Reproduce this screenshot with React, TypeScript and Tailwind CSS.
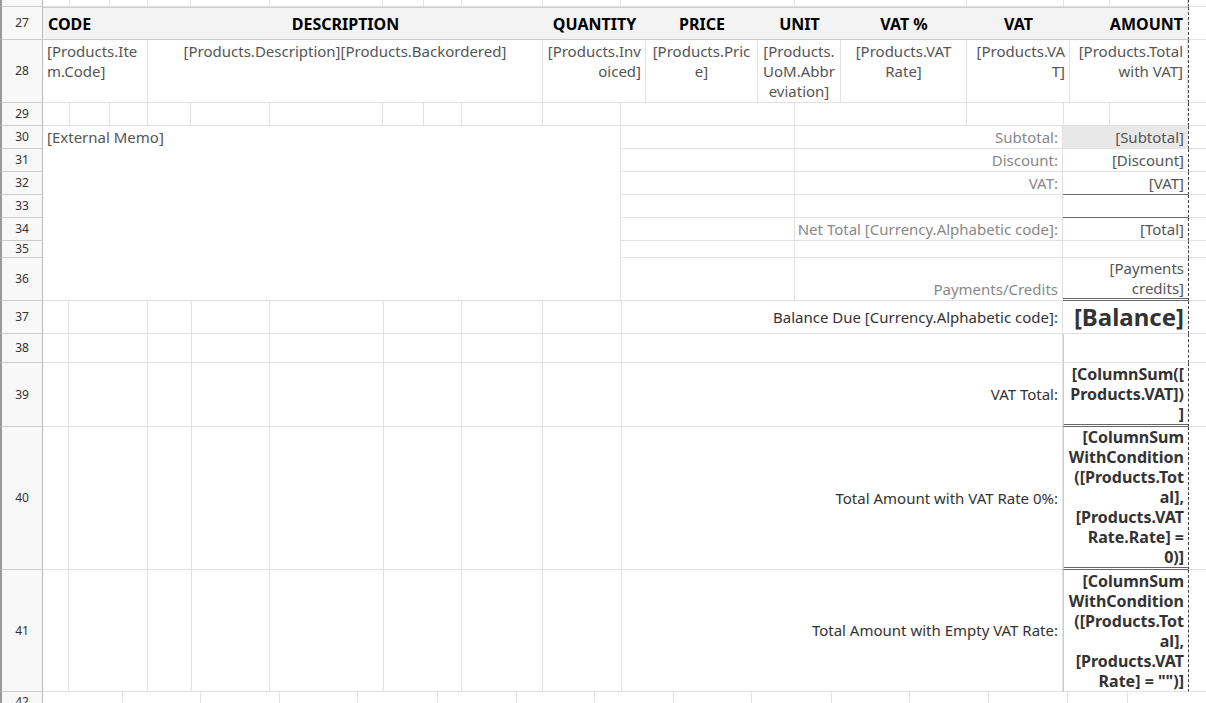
import React from "react";

const grid = "border-r border-b border-[#e2e2e2]";

function RowHead({ n, h }: { n?: number; h: string }) {
  return (
    <div
      className={`${h} w-[43px] shrink-0 flex items-center justify-center bg-[#f8f8f8] border-l-2 border-l-[#999] border-r border-r-[#bbb] border-b border-b-[#ccc] text-[12px] text-[#333]`}
    >
      {n}
    </div>
  );
}

function Edge() {
  return <div className="w-[18px] shrink-0 border-b border-[#e2e2e2] border-l border-l-[#444] [border-left-style:dashed]" />;
}

function Blank({ widths }: { widths: number[] }) {
  return (
    <>
      {widths.map((w, i) => (
        <div key={i} className={`${grid} shrink-0`} style={{ width: w }} />
      ))}
    </>
  );
}

const leftCols = [26, 79, 44, 78, 114, 78, 81, 79];
const row29 = [27, 40, 38, 43, 79, 113, 41, 38, 81, 78, 174, 172, 97, 46, 78];

function SumRow({
  n,
  h,
  label,
  value,
  labelClass = "text-[#333]",
  valueClass = "",
}: {
  n: number;
  h: string;
  label?: string;
  value?: React.ReactNode;
  labelClass?: string;
  valueClass?: string;
}) {
  return (
    <div className={`flex ${h}`}>
      <RowHead n={n} h={h} />
      <Blank widths={leftCols} />
      <div className={`${grid} w-[441px] shrink-0 flex items-center justify-end px-[4px] whitespace-nowrap ${labelClass}`}>{label}</div>
      <div
        className={`w-[125px] shrink-0 border-b border-[#e2e2e2] flex items-center justify-end text-right px-[4px] leading-[20px] [overflow-wrap:anywhere] ${valueClass}`}
      >
        {value}
      </div>
      <Edge />
    </div>
  );
}

function TotRow({
  label,
  value,
  h = "h-[23px]",
  labelClass = "text-[#888]",
  valueClass = "border-b border-[#e2e2e2]",
  bottom = false,
}: {
  label?: string;
  value?: string;
  h?: string;
  labelClass?: string;
  valueClass?: string;
  bottom?: boolean;
}) {
  return (
    <div className={`flex ${h}`}>
      <div className={`${grid} w-[174px] shrink-0`} />
      <div className={`${grid} w-[268px] shrink-0 flex ${bottom ? "items-end" : "items-center"} justify-end px-[4px] whitespace-nowrap ${labelClass}`}>
        {label}
      </div>
      <div className={`w-[125px] shrink-0 flex ${bottom ? "items-end" : "items-center"} justify-end text-right px-[4px] leading-[20px] text-[#555] ${valueClass}`}>
        {value}
      </div>
      <Edge />
    </div>
  );
}

export default function App() {
  const heads: [string, number, string][] = [
    ["CODE", 105, "justify-start"],
    ["DESCRIPTION", 395, "justify-center"],
    ["QUANTITY", 103, "justify-center"],
    ["PRICE", 112, "justify-center"],
    ["UNIT", 83, "justify-center"],
    ["VAT %", 126, "justify-center"],
    ["VAT", 103, "justify-center"],
    ["AMOUNT", 118, "justify-end"],
  ];
  const data: [string, number, string][] = [
    ["[Products.Item.Code]", 105, "text-left"],
    ["[Products.Description][Products.Backordered]", 395, "text-center"],
    ["[Products.Invoiced]", 103, "text-right"],
    ["[Products.Price]", 112, "text-center"],
    ["[Products.UoM.Abbreviation]", 83, "text-center"],
    ["[Products.VAT Rate]", 126, "text-center"],
    ["[Products.VAT]", 103, "text-right"],
    ["[Products.Total with VAT]", 118, "text-right"],
  ];

  return (
    <div className="w-[1206px] h-[703px] overflow-hidden bg-white text-[15px] text-[#555] [font-family:'Liberation_Sans',Arial,sans-serif]">
      {/* row 26 (partial) */}
      <div className="flex h-[7px]">
        <RowHead h="h-[7px]" />
        <Blank widths={row29} />
        <Edge />
      </div>

      {/* 27 header */}
      <div className="flex h-[33px]">
        <RowHead n={27} h="h-[33px]" />
        {heads.map(([t, w, j]) => (
          <div
            key={t}
            className={`shrink-0 flex items-center ${j} px-[5px] bg-[#f3f3f3] border-t border-t-[#ccc] border-b border-b-[#ccc] font-bold text-[16px] text-black`}
            style={{ width: w }}
          >
            {t}
          </div>
        ))}
        <Edge />
      </div>

      {/* 28 data */}
      <div className="flex h-[63px]">
        <RowHead n={28} h="h-[63px]" />
        {data.map(([t, w, a]) => (
          <div
            key={t}
            className={`${grid} shrink-0 px-[4px] pt-[1px] leading-[20px] [overflow-wrap:anywhere] ${a}`}
            style={{ width: w }}
          >
            {t}
          </div>
        ))}
        <Edge />
      </div>

      {/* 29 */}
      <div className="flex h-[23px]">
        <RowHead n={29} h="h-[23px]" />
        <Blank widths={row29} />
        <Edge />
      </div>

      {/* 30 - 36 */}
      <div className="flex h-[175px]">
        <div className="flex flex-col">
          {[30, 31, 32, 33, 34].map((n) => (
            <RowHead key={n} n={n} h="h-[23px]" />
          ))}
          <RowHead n={35} h="h-[17px]" />
          <RowHead n={36} h="h-[43px]" />
        </div>
        <div className={`${grid} w-[578px] shrink-0 px-[4px] leading-[22px]`}>[External Memo]</div>
        <div className="flex flex-col">
          <TotRow label="Subtotal:" value="[Subtotal]" valueClass="bg-[#e8e8e8] border-b border-[#e2e2e2]" />
          <TotRow label="Discount:" value="[Discount]" />
          <TotRow label="VAT:" value="[VAT]" valueClass="border-b border-[#666]" />
          <TotRow valueClass="border-b border-[#666]" />
          <TotRow label="Net Total [Currency.Alphabetic code]:" value="[Total]" />
          <TotRow h="h-[17px]" />
          <TotRow
            h="h-[43px]"
            bottom
            label="Payments/Credits"
            value="[Payments credits]"
            valueClass="border-b-[3px] border-double border-[#666]"
          />
        </div>
      </div>

      <SumRow
        n={37}
        h="h-[33px]"
        label="Balance Due [Currency.Alphabetic code]:"
        value="[Balance]"
        valueClass="font-bold text-[24px] text-[#333]"
      />
      <SumRow n={38} h="h-[29px]" valueClass="border-l border-l-[#ccc]" />
      <SumRow
        n={39}
        h="h-[64px]"
        label="VAT Total:"
        value="[ColumnSum([Products.VAT])]"
        valueClass="font-bold text-[16px] text-[#333] border-l border-l-[#ccc] border-b-[3px] border-double border-b-[#666]"
      />
      <SumRow
        n={40}
        h="h-[143px]"
        label="Total Amount with VAT Rate 0%:"
        value="[ColumnSum WithCondition ([Products.Total], [Products.VAT Rate.Rate] = 0)]"
        valueClass="font-bold text-[16px] text-[#333] border-l border-l-[#ccc] border-b-[3px] border-double border-b-[#666]"
      />
      <SumRow
        n={41}
        h="h-[122px]"
        label="Total Amount with Empty VAT Rate:"
        value={'[ColumnSum WithCondition ([Products.Total], [Products.VAT Rate] = "")]'}
        valueClass="font-bold text-[16px] text-[#333] border-l border-l-[#ccc]"
      />

      {/* 42 */}
      <div className="flex h-[20px]">
        <RowHead n={42} h="h-[20px]" />
        <Blank widths={[80, 78, 79, 78, 80, 79, 78, 79, 78, 80, 78, 79, 79, 60]} />
      </div>
    </div>
  );
}
